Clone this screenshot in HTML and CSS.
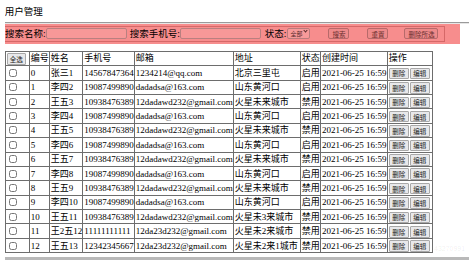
FILE: index.html
```html
<!DOCTYPE html>
<html lang="zh">

<head>
  <meta charset="UTF-8" />
  <title>用户管理</title>
  <link rel="stylesheet" href="styles.css">
</head>

<body>
  <div class="title">用户管理</div>
  <hr>

  <!-- 검색박스 -->
  <div class="search-wrap">
    <form class="search">
      <label>搜索名称:</label><input type="text" class="ipt">
      <label class="ml">搜索手机号:</label><input type="text" class="ipt">
      <label class="ml2">状态:</label>
      <span class="sel"><select>
          <option>全部</option>
          <option>启用</option>
          <option>禁用</option>
        </select></span>
      <button type="button" class="btn b1">搜索</button>
      <button type="button" class="btn b2">重置</button>
      <button type="button" class="btn b3">删除所选</button>
    </form>
  </div>

  <!-- 목록 테이블 -->
  <table class="list">
    <tr>
      <td class="c1"><button type="button" class="sbtn">全选</button></td>
      <td class="c2">编号</td>
      <td class="c3">姓名</td>
      <td>手机号</td>
      <td>邮箱</td>
      <td class="c6">地址</td>
      <td>状态</td>
      <td>创建时间</td>
      <td class="ops">操作</td>
    </tr>
    <tr><td><input type="checkbox"></td><td>0</td><td>张三1</td><td>14567847364</td><td>1234214@qq.com</td><td>北京三里屯</td><td>启用</td><td>2021-06-25 16:59</td><td class="ops"><button type="button" class="sbtn">删除</button><button type="button" class="sbtn">编辑</button></td></tr>
    <tr><td><input type="checkbox"></td><td>1</td><td>李四2</td><td>19087499890</td><td>dadadsa@163.com</td><td>山东黄河口</td><td>启用</td><td>2021-06-25 16:59</td><td class="ops"><button type="button" class="sbtn">删除</button><button type="button" class="sbtn">编辑</button></td></tr>
    <tr><td><input type="checkbox"></td><td>2</td><td>王五3</td><td>10938476389</td><td>12dadawd232@gmail.com</td><td>火星未来城市</td><td>禁用</td><td>2021-06-25 16:59</td><td class="ops"><button type="button" class="sbtn">删除</button><button type="button" class="sbtn">编辑</button></td></tr>
    <tr><td><input type="checkbox"></td><td>3</td><td>李四4</td><td>19087499890</td><td>dadadsa@163.com</td><td>山东黄河口</td><td>启用</td><td>2021-06-25 16:59</td><td class="ops"><button type="button" class="sbtn">删除</button><button type="button" class="sbtn">编辑</button></td></tr>
    <tr><td><input type="checkbox"></td><td>4</td><td>王五5</td><td>10938476389</td><td>12dadawd232@gmail.com</td><td>火星未来城市</td><td>禁用</td><td>2021-06-25 16:59</td><td class="ops"><button type="button" class="sbtn">删除</button><button type="button" class="sbtn">编辑</button></td></tr>
    <tr><td><input type="checkbox"></td><td>5</td><td>李四6</td><td>19087499890</td><td>dadadsa@163.com</td><td>山东黄河口</td><td>启用</td><td>2021-06-25 16:59</td><td class="ops"><button type="button" class="sbtn">删除</button><button type="button" class="sbtn">编辑</button></td></tr>
    <tr><td><input type="checkbox"></td><td>6</td><td>王五7</td><td>10938476389</td><td>12dadawd232@gmail.com</td><td>火星未来城市</td><td>禁用</td><td>2021-06-25 16:59</td><td class="ops"><button type="button" class="sbtn">删除</button><button type="button" class="sbtn">编辑</button></td></tr>
    <tr><td><input type="checkbox"></td><td>7</td><td>李四8</td><td>19087499890</td><td>dadadsa@163.com</td><td>山东黄河口</td><td>启用</td><td>2021-06-25 16:59</td><td class="ops"><button type="button" class="sbtn">删除</button><button type="button" class="sbtn">编辑</button></td></tr>
    <tr><td><input type="checkbox"></td><td>8</td><td>王五9</td><td>10938476389</td><td>12dadawd232@gmail.com</td><td>火星未来城市</td><td>禁用</td><td>2021-06-25 16:59</td><td class="ops"><button type="button" class="sbtn">删除</button><button type="button" class="sbtn">编辑</button></td></tr>
    <tr><td><input type="checkbox"></td><td>9</td><td>李四10</td><td>19087499890</td><td>dadadsa@163.com</td><td>山东黄河口</td><td>启用</td><td>2021-06-25 16:59</td><td class="ops"><button type="button" class="sbtn">删除</button><button type="button" class="sbtn">编辑</button></td></tr>
    <tr><td><input type="checkbox"></td><td>10</td><td>王五11</td><td>10938476389</td><td>12dadawd232@gmail.com</td><td>火星未3来城市</td><td>禁用</td><td>2021-06-25 16:59</td><td class="ops"><button type="button" class="sbtn">删除</button><button type="button" class="sbtn">编辑</button></td></tr>
    <tr><td><input type="checkbox"></td><td>11</td><td>王2五12</td><td>11111111111</td><td>12da23d232@gmail.com</td><td>火星未2来城市</td><td>禁用</td><td>2021-06-25 16:59</td><td class="ops"><button type="button" class="sbtn">删除</button><button type="button" class="sbtn">编辑</button></td></tr>
    <tr><td><input type="checkbox"></td><td>12</td><td>王五13</td><td>12342345667</td><td>12da23d232@gmail.com</td><td>火星未2来1城市</td><td>禁用</td><td>2021-06-25 16:59</td><td class="ops"><button type="button" class="sbtn">删除</button><button type="button" class="sbtn">编辑</button></td></tr>
  </table>

  <!-- 워터마크 -->
  <div class="mark">43270991</div>

  <!-- 가로 스크롤바 -->
  <div class="hscroll"></div>
</body>

</html>
```

FILE: styles.css
```css
/* 초기화 */
html,
body {
  margin: 0;
  padding: 0;
}

body {
  margin: 4.8px;
  font-family: "Liberation Serif", "Noto Sans CJK SC", serif;
  font-size: 9.5px;
  color: #000;
  background-color: #fff;
}

.title {
  line-height: 12px;
  padding-top: 1px;
}

hr {
  margin: 4px 0 0;
  height: 0;
  border: 0;
  border-top: 1px solid #9a9a9a;
  border-bottom: 1px solid #e6e6e6;
}

/* 검색박스 */
.search-wrap {
  width: 460px;
  margin: 0 0 0 -4.8px;
  box-sizing: border-box;
  padding: 2px;
  background-color: #f78d8d;
}

.search {
  display: flex;
  align-items: center;
  width: 441px;
  height: 16px;
  box-sizing: border-box;
  margin: 0 0 0 2px;
  border: 1px solid #d56868;
  white-space: nowrap;
}

.search label {
  line-height: 14px;
}

.ml {
  margin-left: 3px;
}

.ml2 {
  margin-left: 4px;
}

.ipt {
  width: 81px;
  height: 11px;
  box-sizing: border-box;
  margin: 0;
  padding: 0;
  border: 1px solid #b98080;
  border-radius: 2px;
  background-color: #f79898;
}

/* 셀렉트 */
.sel {
  position: relative;
  margin-left: 1px;
}

.sel select {
  appearance: none;
  -webkit-appearance: none;
  width: 23px;
  height: 11px;
  box-sizing: border-box;
  margin: 0;
  padding: 0 0 0 2px;
  border: 1px solid #b97c7c;
  border-radius: 2px;
  background-color: #f79a9a;
  font-family: "Noto Sans CJK SC", sans-serif;
  font-size: 6px;
  color: #5a2b2b;
  vertical-align: middle;
}

/* 화살표 */
.sel::after {
  content: '';
  position: absolute;
  right: 3px;
  top: 1px;
  width: 2px;
  height: 2px;
  border-right: 1px solid #5a2b2b;
  border-bottom: 1px solid #5a2b2b;
  transform: rotate(45deg);
}

.btn {
  height: 11px;
  box-sizing: border-box;
  margin: 0;
  padding: 0 3px;
  border: 1px solid #b76a6a;
  border-radius: 2px;
  background-color: #ee8a8a;
  font-family: "Noto Sans CJK SC", sans-serif;
  font-size: 6.5px;
  line-height: 8px;
  color: #6b2f2f;
}

.b1 {
  margin-left: 18px;
}

.b2 {
  margin-left: 18px;
}

.b3 {
  margin-left: 16px;
}

/* 목록 테이블 */
.list {
  margin-top: 7px;
  border-collapse: collapse;
  font-size: 9px;
}

.list td {
  height: 13.4px;
  padding: 0 0 0 1px;
  border: 1px solid #6d6d6d;
  line-height: 12px;
  white-space: nowrap;
}

/* 열 너비 */
.list .c1 {
  width: 22px;
}

.list .c2 {
  width: 18px;
}

.list .c3 {
  width: 30px;
}

.list .c6 {
  width: 65px;
}

.list input[type=checkbox] {
  display: block;
  width: 8px;
  height: 8px;
  margin: 0 0 0 2px;
}

.sbtn {
  height: 11.5px;
  box-sizing: border-box;
  margin: 0;
  padding: 0 2px;
  border: 1px solid #a8a8a8;
  border-radius: 1px;
  background-color: #e8e8ea;
  font-family: "Noto Sans CJK SC", sans-serif;
  font-size: 6.5px;
  line-height: 8px;
  color: #222;
  vertical-align: middle;
}

.list .ops {
  padding-left: 1px;
  width: 43px;
}

.ops .sbtn {
  width: 20px;
}

.ops .sbtn+.sbtn {
  margin-left: 1px;
}

/* 워터마크 */
.mark {
  position: absolute;
  left: 434px;
  top: 245px;
  font-family: "Liberation Sans", sans-serif;
  font-size: 7px;
  color: rgba(0, 0, 0, .08);
}

/* 가로 스크롤바 */
.hscroll {
  height: 8px;
  margin-top: 4px;
  background-color: #b9b9b9;
}
```
